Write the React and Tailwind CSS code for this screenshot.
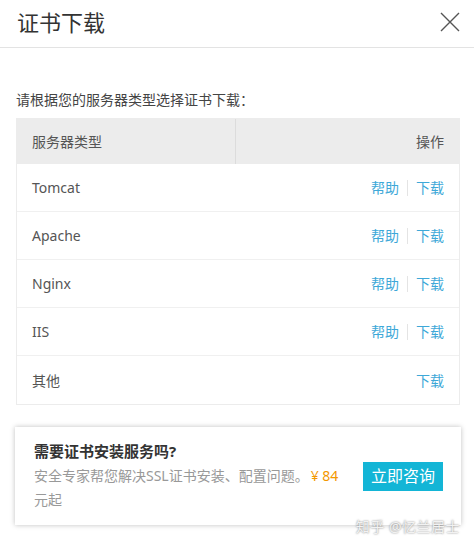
const rows = [
  { name: "Tomcat", help: true },
  { name: "Apache", help: true },
  { name: "Nginx", help: true },
  { name: "IIS", help: true },
  { name: "其他", help: false },
];

const App = () => {
  return (
    <div className="w-[474px] h-[545px] bg-white text-[#333] overflow-hidden relative" style={{ fontFamily: '"Noto Sans", "Noto Sans CJK SC", sans-serif' }}>
      {/* header */}
      <div className="h-[48px] flex items-center justify-between pl-[17px] pr-[14px] border-b border-[#e3e3e3]">
        <h1 className="text-[22px] leading-none text-[#333] -mt-[4px]">证书下载</h1>
        <svg width="20" height="20" viewBox="0 0 20 20" className="-mt-[4px]">
          <path d="M1 1L19 19M19 1L1 19" stroke="#555" strokeWidth="1.4" fill="none" />
        </svg>
      </div>

      <div className="px-[16px] pt-[42px]">
        <p className="text-[14px] text-[#444] leading-[20px]">请根据您的服务器类型选择证书下载：</p>

        {/* table */}
        <div className="mt-[8px] border border-[#ececec] w-[444px]">
          <div className="flex h-[45px] bg-[#ececec] text-[14px] text-[#555]">
            <div className="w-[219px] border-r border-[#dcdcdc] flex items-center pl-[15px]">服务器类型</div>
            <div className="flex-1 flex items-center justify-end pr-[15px]">操作</div>
          </div>
          {rows.map((r, i) => (
            <div key={r.name} className={"flex items-center justify-between h-[48px] pl-[15px] pr-[15px] text-[14px] " + (i < rows.length - 1 ? "border-b border-[#f0f0f0]" : "")}>
              <span className="text-[#555]">{r.name}</span>
              <span className="flex items-center text-[#3ea8d8]">
                {r.help && (
                  <>
                    <span>帮助</span>
                    <span className="mx-[8px] w-px h-[16px] bg-[#e4e4e4]" />
                  </>
                )}
                <span>下载</span>
              </span>
            </div>
          ))}
        </div>
      </div>

      {/* service card */}
      <div className="mx-[15px] mt-[22px] w-[446px] h-[98px] bg-white shadow-[0_0_5px_rgba(0,0,0,0.25)] flex items-center pl-[19px] pr-[18px]">
        <div className="flex-1">
          <div className="text-[15px] font-bold text-[#333] leading-[22px]">需要证书安装服务吗?</div>
          <div className="text-[14px] text-[#999] leading-[24px] mt-[2px]">
            安全专家帮您解决SSL证书安装、配置问题。<span className="text-[#f39800] ml-[2px]">¥ 84</span>
            <br />
            元起
          </div>
        </div>
        <button className="shrink-0 w-[80px] h-[29px] bg-[#13b5d6] text-white text-[16px]">立即咨询</button>
      </div>

      <div className="absolute right-[14px] bottom-[8px] text-[14px] tracking-[0.5px] text-[#f2f2f2] [text-shadow:0_0_2px_rgba(0,0,0,0.55)]">知乎 @忆兰居士</div>
    </div>
  );
};

export default App;
